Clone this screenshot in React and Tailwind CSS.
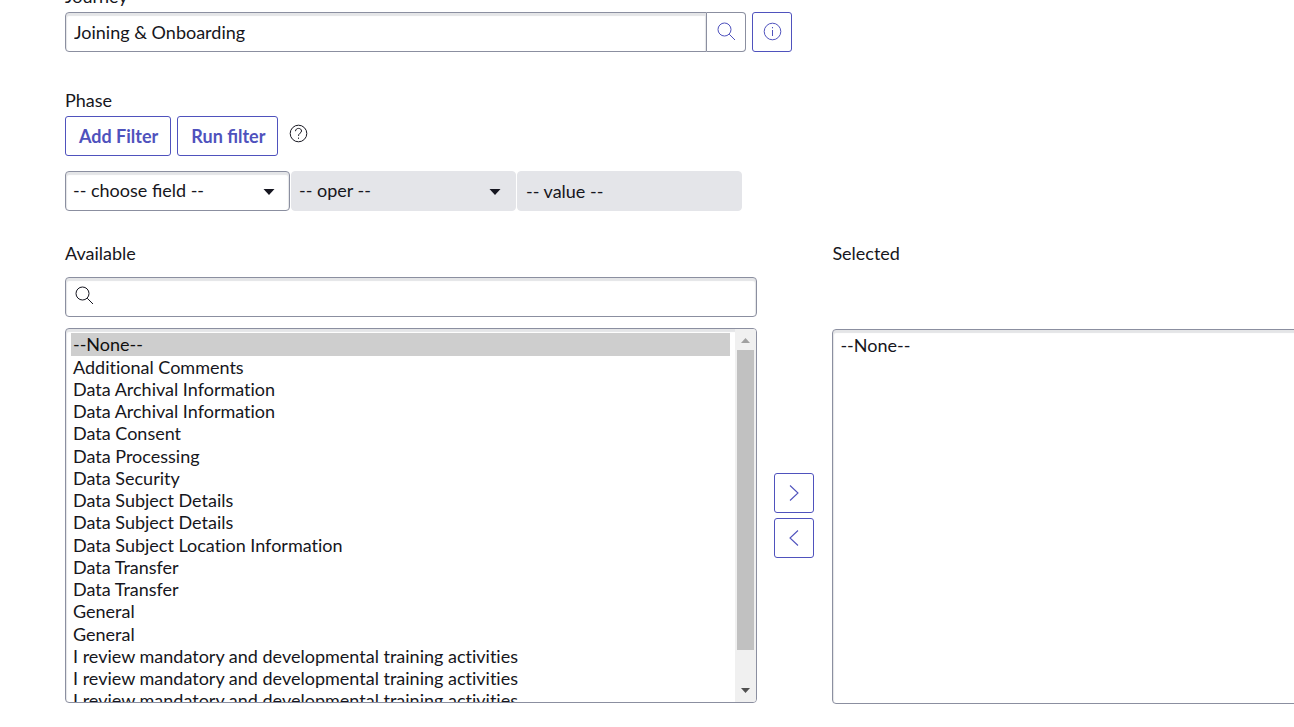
import { useState } from 'react'

const available = [
  '--None--',
  'Additional Comments',
  'Data Archival Information',
  'Data Archival Information',
  'Data Consent',
  'Data Processing',
  'Data Security',
  'Data Subject Details',
  'Data Subject Details',
  'Data Subject Location Information',
  'Data Transfer',
  'Data Transfer',
  'General',
  'General',
  'I review mandatory and developmental training activities',
  'I review mandatory and developmental training activities',
  'I review mandatory and developmental training activities',
  'I review mandatory and developmental training activities',
  'I review mandatory and developmental training activities',
]

const field = 'border border-[#8b8fa0] bg-white shadow-[inset_0_2px_1px_1px_#e4e5e7]'
const action = 'rounded-[3px] border border-[#4f52bd] bg-white text-[#4f52bd]'

function SearchIcon() {
  return (
    <svg className="size-5" viewBox="0 0 20 20" fill="none" stroke="currentColor" strokeWidth="1" aria-hidden="true">
      <circle cx="8.5" cy="7.5" r="6.5" />
      <path d="M13.2 12.2 19 18" />
    </svg>
  )
}

function InfoIcon() {
  return (
    <svg className="size-5" viewBox="0 0 20 20" fill="none" stroke="currentColor" strokeWidth="1" aria-hidden="true">
      <circle cx="10.5" cy="9.5" r="8.3" />
      <path d="M10.5 8V14M10.5 5V6.3" />
    </svg>
  )
}

function HelpIcon() {
  return (
    <svg className="size-5" viewBox="0 0 20 20" fill="none" stroke="currentColor" strokeWidth="1" aria-hidden="true">
      <circle cx="10.5" cy="9.5" r="8.3" />
      <path d="M7.5 7.2C7.6 5.3 8.9 4.4 10.5 4.4C12.3 4.4 13.5 5.5 13.5 7C13.5 9.2 10.5 9.1 10.5 11.9M10.5 13.6V14.8" />
    </svg>
  )
}

function Chevron({ d }) {
  return (
    <svg className="size-5" viewBox="0 0 20 20" fill="none" stroke="currentColor" strokeWidth="1.1" aria-hidden="true">
      <path d={d} />
    </svg>
  )
}

function Dropdown({ label, text, disabled, className }) {
  return (
    <div className="relative min-w-0">
      <select
        aria-label={label}
        disabled={disabled}
        className={`h-10 w-full appearance-none rounded px-[7px] pb-0.5 text-[18px] opacity-100 ${className}`}
      >
        <option>{text}</option>
      </select>
      <svg className="pointer-events-none absolute top-[18px] right-[15px] h-1.5 w-3" viewBox="0 0 12 6" aria-hidden="true">
        <path d="M0.5 0H11.5L6 6Z" fill="#161620" />
      </svg>
    </div>
  )
}

function ScrollRail() {
  return (
    <div className="flex w-[21px] flex-col items-center bg-[#f0f0f0]" aria-hidden="true">
      <svg className="mt-[9px] mb-[7px] h-[5px] w-[9px]" viewBox="0 0 9 5">
        <path d="M0 5H9L4.5 0Z" fill="#a0a0a0" />
      </svg>
      <div className="h-[300px] w-[17px] bg-[#c1c1c1]" />
      <svg className="mt-auto mb-[9px] h-[5px] w-[9px]" viewBox="0 0 9 5">
        <path d="M0 0H9L4.5 5Z" fill="#505050" />
      </svg>
    </div>
  )
}

export default function App() {
  const [journey, setJourney] = useState('Joining & Onboarding')
  const [picked, setPicked] = useState(['0'])

  return (
    <main className="flex flex-col overflow-hidden bg-white pl-[65px] font-[Lato,sans-serif] text-[18px] leading-[22px] text-[#161620]">
      <label htmlFor="journey" className="-mt-[15px]">Journey</label>
      <div className="mt-[5px] flex max-w-[727px] gap-1.5">
        <div className="flex min-w-0 flex-1">
          <input
            id="journey"
            value={journey}
            onChange={(e) => setJourney(e.target.value)}
            className={`h-10 min-w-0 flex-1 rounded-l px-2 ${field}`}
          />
          <button
            type="button"
            aria-label="Look up journey"
            className="flex h-10 w-[39px] items-center justify-center rounded-r border border-l-0 border-[#8b8fa0] text-[#4f52bd]"
          >
            <SearchIcon />
          </button>
        </div>
        <button type="button" aria-label="Preview journey" className={`flex size-10 items-center justify-center ${action}`}>
          <InfoIcon />
        </button>
      </div>

      <p className="mt-[37px]">Phase</p>
      <div className="mt-[5px] flex gap-1.5">
        <button type="button" className={`h-10 pr-3 pl-[13px] font-bold ${action}`}>Add Filter</button>
        <button type="button" className={`h-10 pr-3 pl-[13px] font-bold ${action}`}>Run filter</button>
        <button type="button" aria-label="Help" className="mt-2 ml-1 self-start">
          <HelpIcon />
        </button>
      </div>

      <div className="mt-[15px] grid max-w-[677px] grid-cols-3 gap-px">
        <Dropdown label="Field" text="-- choose field --" className={field} />
        <Dropdown label="Operator" text="-- oper --" disabled className="border border-[#e4e5e9] bg-[#e4e5e9]" />
        <input
          aria-label="Value"
          disabled
          defaultValue="-- value --"
          className="h-10 min-w-0 rounded border border-[#e4e5e9] bg-[#e4e5e9] px-2"
        />
      </div>

      <div className="mt-[31px] grid grid-cols-[minmax(0,3fr)_75px_minmax(0,2fr)]">
        <div>
          <label htmlFor="available" className="block">Available</label>
          <div className={`mt-[13px] flex h-10 rounded pt-2 pl-2 ${field}`}>
            <SearchIcon />
            <input aria-label="Search available" className="min-w-0 flex-1 px-2 pb-2 outline-none" />
          </div>
          <div className={`mt-[11px] flex h-[375px] overflow-hidden rounded ${field}`}>
            <select
              id="available"
              multiple
              value={picked}
              onChange={(e) => setPicked([...e.target.selectedOptions].map((o) => o.value))}
              className="mx-[5px] mt-1 min-w-0 flex-1 appearance-none overflow-y-auto leading-normal [font-variant-ligatures:none] [scrollbar-width:none]"
            >
              {available.map((name, i) => (
                <option key={i} value={i} className="px-0.5 nth-[4n+1]:pb-px">{name}</option>
              ))}
            </select>
            <ScrollRail />
          </div>
        </div>

        <div className="flex flex-col items-start gap-[5px] pt-[231px] pl-[17px]">
          <button type="button" aria-label="Add" className={`flex size-10 items-center justify-center ${action}`}>
            <Chevron d="M6 2.5 14 10 6 17.5" />
          </button>
          <button type="button" aria-label="Remove" className={`flex size-10 items-center justify-center ${action}`}>
            <Chevron d="M14 2.5 6 10 14 17.5" />
          </button>
        </div>

        <div>
          <label htmlFor="selected" className="block">Selected</label>
          <select
            id="selected"
            multiple
            className={`mt-[65px] block h-[375px] w-[calc(100%+4px)] appearance-none rounded-l px-[5px] pt-1 leading-normal [scrollbar-width:none] ${field}`}
          >
            <option className="px-0.5">--None--</option>
          </select>
        </div>
      </div>
    </main>
  )
}
